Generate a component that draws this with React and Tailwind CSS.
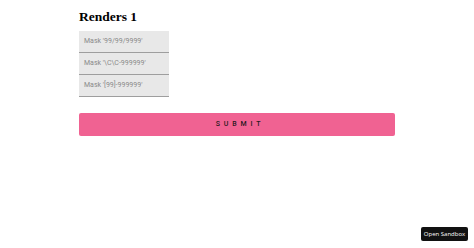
import React from "react";

const masks = ["Mask '99/99/9999'", "Mask '\\C\\C-999999'", "Mask '[99]-999999'"];

const App = () => {
  return (
    <div className="relative h-[248px] w-[474px] bg-white">
      <div className="pl-[79px] pt-[7px]">
        <h1 className="text-[13.5px] font-bold leading-[20px] text-black [font-family:'Liberation_Serif',serif]">
          Renders 1
        </h1>
        <div className="mt-[4px] w-[90px]">
          {masks.map((m) => (
            <div
              key={m}
              className="flex h-[22px] items-center border-b border-[#9e9e9e] bg-[#e8e8e8] pl-[5px] text-[7px] text-[#8a8a8a] [font-family:Roboto,sans-serif]"
            >
              {m}
            </div>
          ))}
        </div>
        <button className="mt-[16px] flex h-[23px] w-[316px] items-center justify-center rounded-[2px] bg-[#f06292] pl-[6px] text-[7px] font-medium tracking-[0.55em] text-[#2a1a22] [font-family:Roboto,sans-serif]">
          SUBMIT
        </button>
      </div>
      <div className="absolute left-[421px] top-[227px] flex h-[14px] w-[47px] items-center justify-center rounded-[2px] bg-[#111] text-[6px] text-white [font-family:'Open_Sans',sans-serif]">
        Open Sandbox
      </div>
    </div>
  );
};

export default App;
